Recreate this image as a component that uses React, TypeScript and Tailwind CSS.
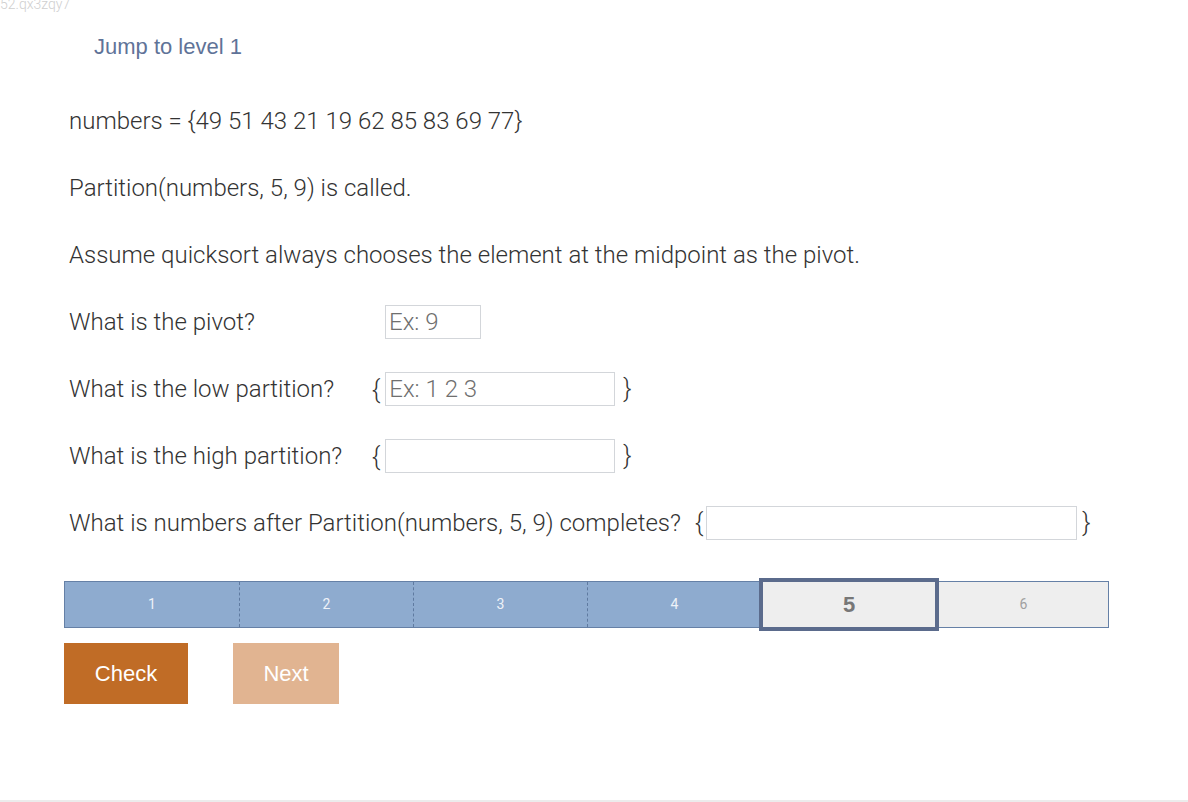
import React from 'react';

const roboto = { fontFamily: 'Roboto, "Liberation Sans", sans-serif' };

function Brace({ ch }: { ch: string }) {
  return <span className="text-[25px] font-light leading-none text-[#333]">{ch}</span>;
}

function Field({ width, placeholder }: { width: string; placeholder?: string }) {
  return (
    <input
      readOnly
      placeholder={placeholder}
      className={`${width} h-[34px] border border-[#d3d6da] bg-white px-[3px] text-[24px] font-light text-[#333] outline-none placeholder:text-[#6f6f6f]`}
    />
  );
}

export default function App() {
  const levels = [1, 2, 3, 4, 5, 6];
  return (
    <div className="relative min-h-[802px] w-full bg-white font-light text-[#333]" style={roboto}>
      <div className="absolute -top-[6px] left-0 text-[14px] text-[#cfcfcf]" style={{ fontFamily: 'Roboto, sans-serif' }}>
        52.qx3zqy7
      </div>

      <div className="pl-[64px]">
        <div className="pt-[33px] pl-[30px] text-[22px] font-normal leading-[28px] text-[#5f7398]" style={{ fontFamily: '"Liberation Sans", Arial, sans-serif' }}>
          Jump to level 1
        </div>

        <div className="mt-[43px] flex flex-col gap-[33px] pl-[5px] text-[24px]">
          <div className="flex h-[34px] items-center">numbers = {'{'}49 51 43 21 19 62 85 83 69 77{'}'}</div>
          <div className="flex h-[34px] items-center">Partition(numbers, 5, 9) is called.</div>
          <div className="flex h-[34px] items-center">Assume quicksort always chooses the element at the midpoint as the pivot.</div>
          <div className="flex h-[34px] items-center">
            <span className="w-[316px] shrink-0">What is the pivot?</span>
            <Field width="w-[96px]" placeholder="Ex: 9" />
          </div>
          <div className="flex h-[34px] items-center">
            <span className="w-[303px] shrink-0">What is the low partition?</span>
            <Brace ch="{" />
            <span className="ml-[5px]"><Field width="w-[230px]" placeholder="Ex: 1 2 3" /></span>
            <span className="ml-[8px]"><Brace ch="}" /></span>
          </div>
          <div className="flex h-[34px] items-center">
            <span className="w-[303px] shrink-0">What is the high partition?</span>
            <Brace ch="{" />
            <span className="ml-[5px]"><Field width="w-[230px]" /></span>
            <span className="ml-[8px]"><Brace ch="}" /></span>
          </div>
          <div className="flex h-[34px] items-center">
            <span>What is numbers after Partition(numbers, 5, 9) completes?</span>
            <span className="ml-[14px]"><Brace ch="{" /></span>
            <span className="ml-[3px]"><Field width="w-[371px]" /></span>
            <span className="ml-[5px]"><Brace ch="}" /></span>
          </div>
        </div>

        <div className="mt-[41px] flex h-[47px] w-[1045px] border border-[#6580a6] bg-[#8eabcf]">
          {levels.map((n, i) => {
            if (n === 5) {
              return (
                <div
                  key={n}
                  className="relative z-10 -my-[4px] -ml-[2px] flex w-[180px] shrink-0 items-center justify-center border-[4px] border-[#5b6b8c] bg-[#eeeeee] text-[22px] font-bold text-[#777]"
                  style={{ fontFamily: '"Liberation Sans", Arial, sans-serif' }}
                >
                  5
                </div>
              );
            }
            return (
              <div
                key={n}
                className={`flex items-center justify-center text-[14px] font-normal ${
                  n === 6 ? 'flex-1 bg-[#eeeeee] text-[#a0a0a0]' : 'w-[174px] shrink-0 text-[#eef2f8]'
                } ${i > 0 && n < 5 ? 'border-l border-dashed border-[#5f7aa0]' : ''}`}
              >
                {n}
              </div>
            );
          })}
        </div>

        <div className="mt-[15px] flex gap-[45px]" style={{ fontFamily: '"Liberation Sans", Arial, sans-serif' }}>
          <button className="h-[61px] w-[124px] bg-[#c06c26] text-[22px] font-normal text-white">Check</button>
          <button className="h-[61px] w-[106px] bg-[#e1b491] text-[22px] font-normal text-white">Next</button>
        </div>
      </div>

      <div className="absolute bottom-0 left-0 h-[2px] w-full bg-[#ececec]" />
    </div>
  );
}
